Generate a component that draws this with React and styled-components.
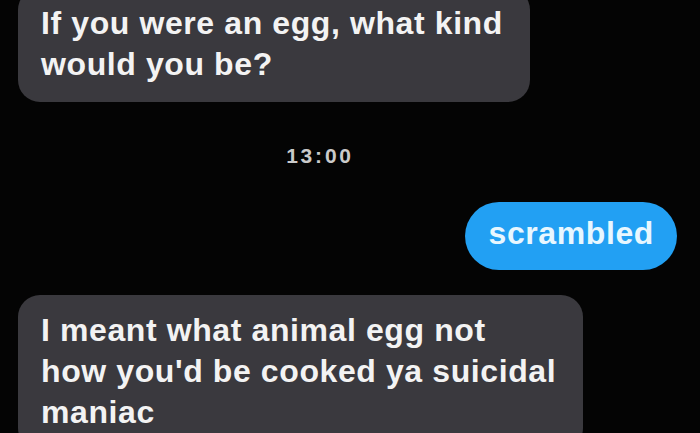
import React from 'react';
import styled, { createGlobalStyle } from 'styled-components';

const GlobalStyle = createGlobalStyle`
    html, body {
        margin: 0;
        padding: 0;
        background: #040404;
    }
`;

const messages = [
    { type: 'in', text: 'If you were an egg, what kind\nwould you be?' },
    { type: 'time', text: '13:00' },
    { type: 'out', text: 'scrambled' },
    { type: 'in', text: "I meant what animal egg not\nhow you'd be cooked ya suicidal\nmaniac" },
];

function App() {
    return (
        <>
            <GlobalStyle />
            <ChatStyled>
                {messages.map((m, i) =>
                    m.type === 'time' ? (
                        <TimeRow key={i}>
                            <Time>{m.text}</Time>
                        </TimeRow>
                    ) : (
                        <Row key={i} $out={m.type === 'out'}>
                            <Bubble $out={m.type === 'out'}>{m.text}</Bubble>
                        </Row>
                    )
                )}
            </ChatStyled>
        </>
    );
}

const ChatStyled = styled.div`
    width: 700px;
    height: 433px;
    overflow: hidden;
    background: #040404;
    display: flex;
    flex-direction: column;
    font-family: 'Liberation Sans', Arial, sans-serif;
    -webkit-font-smoothing: antialiased;
    & > :first-child {
        margin-top: -12px;
    }
`;

const Row = styled.div`
    display: flex;
    justify-content: ${(p) => (p.$out ? 'flex-end' : 'flex-start')};
    padding: ${(p) => (p.$out ? '0 23px 0 0' : '0 0 0 18px')};
    margin-bottom: ${(p) => (p.$out ? '25px' : '0')};
`;

const Bubble = styled.div`
    white-space: pre-line;
    font-weight: 700;
    font-size: 32px;
    line-height: 41px;
    letter-spacing: 0.6px;
    color: ${(p) => (p.$out ? '#e8f7ff' : '#f3f3f3')};
    background: ${(p) => (p.$out ? '#22a0f3' : '#3a393e')};
    border-radius: ${(p) => (p.$out ? '34px' : '22px')};
    padding: ${(p) => (p.$out ? '11px 23px 16px 24px' : '15px 27px 17px 23px')};
`;

const TimeRow = styled.div`
    display: flex;
    justify-content: center;
    padding: 0 60px 0 0;
    margin: 42px 0 34px;
`;

const Time = styled.span`
    font-weight: 700;
    font-size: 21px;
    line-height: 24px;
    letter-spacing: 2.8px;
    color: #cacaca;
`;

export default App;
